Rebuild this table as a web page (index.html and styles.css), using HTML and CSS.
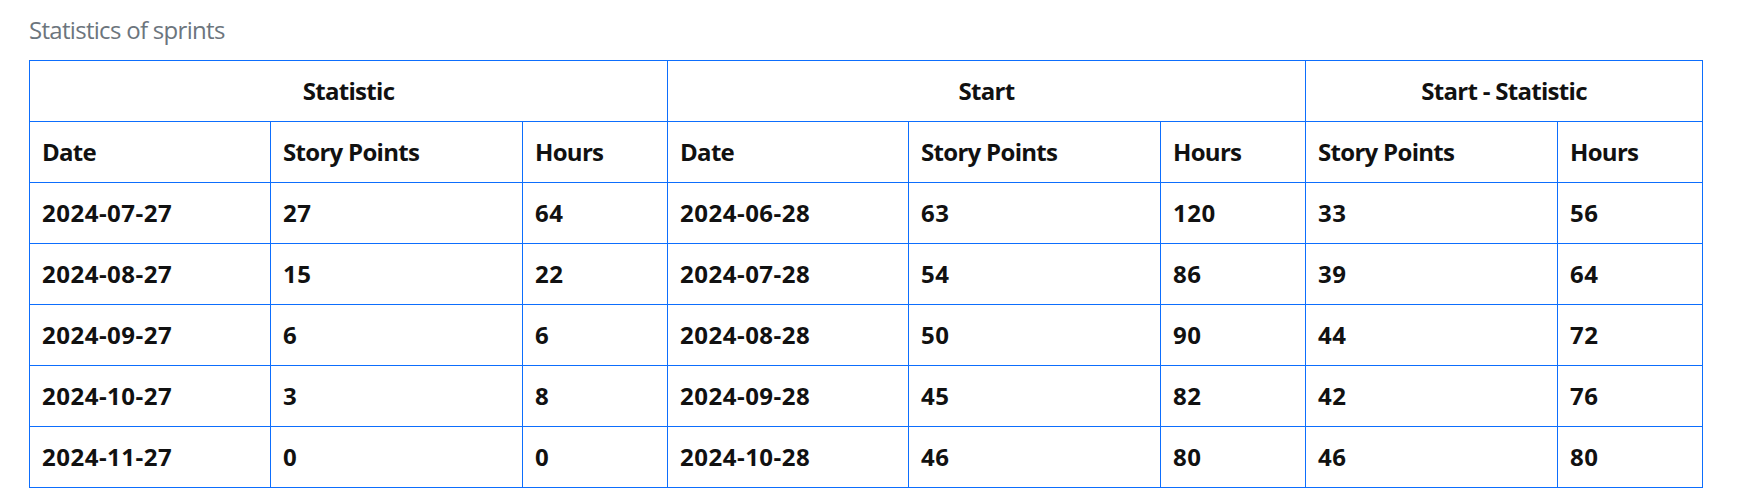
FILE: index.html
```html
<!DOCTYPE html>
<html lang="en">
<head>
<meta charset="utf-8">
<title>Statistics of sprints</title>
<link rel="stylesheet" href="styles.css">
</head>
<body>
<div class="wrap">
<table class="stats">
  <caption>Statistics of sprints</caption>
  <colgroup>
    <col class="c-date"><col class="c-sp"><col class="c-h">
    <col class="c-date"><col class="c-sp"><col class="c-h">
    <col class="c-sp"><col class="c-h">
  </colgroup>
  <thead>
    <tr class="group">
      <th colspan="3">Statistic</th>
      <th colspan="3">Start</th>
      <th colspan="2">Start - Statistic</th>
    </tr>
    <tr>
      <th>Date</th><th>Story Points</th><th>Hours</th>
      <th>Date</th><th>Story Points</th><th>Hours</th>
      <th>Story Points</th><th>Hours</th>
    </tr>
  </thead>
  <tbody>
    <tr><td>2024-07-27</td><td>27</td><td>64</td><td>2024-06-28</td><td>63</td><td>120</td><td>33</td><td>56</td></tr>
    <tr><td>2024-08-27</td><td>15</td><td>22</td><td>2024-07-28</td><td>54</td><td>86</td><td>39</td><td>64</td></tr>
    <tr><td>2024-09-27</td><td>6</td><td>6</td><td>2024-08-28</td><td>50</td><td>90</td><td>44</td><td>72</td></tr>
    <tr><td>2024-10-27</td><td>3</td><td>8</td><td>2024-09-28</td><td>45</td><td>82</td><td>42</td><td>76</td></tr>
    <tr><td>2024-11-27</td><td>0</td><td>0</td><td>2024-10-28</td><td>46</td><td>80</td><td>46</td><td>80</td></tr>
  </tbody>
</table>
</div>
</body>
</html>
```
FILE: styles.css
```css
html, body {
  margin: 0;
  padding: 0;
  background: #fff;
}

body {
  font-family: "Open Sans", "Noto Sans", "Liberation Sans", sans-serif;
  font-size: 24px;
  line-height: 1.5;
  color: #111;
}

.wrap {
  padding-left: 29px;
}

.stats {
  border-collapse: collapse;
  table-layout: fixed;
  width: 1673px;
}

.stats caption {
  caption-side: top;
  text-align: left;
  padding: 12px 0;
  color: #6c757d;
  font-weight: 400;
  letter-spacing: -0.7px;
}

.c-date { width: 241px; }
.c-sp { width: 252px; }
.c-h { width: 145px; }

.stats th,
.stats td {
  border: 1px solid #0d6efd;
  padding: 12px 12px;
  text-align: left;
  font-weight: 700;
  white-space: nowrap;
}

.stats th {
  letter-spacing: -0.7px;
}

.stats td {
  letter-spacing: 0.5px;
}

.stats .group th {
  text-align: center;
}
```
